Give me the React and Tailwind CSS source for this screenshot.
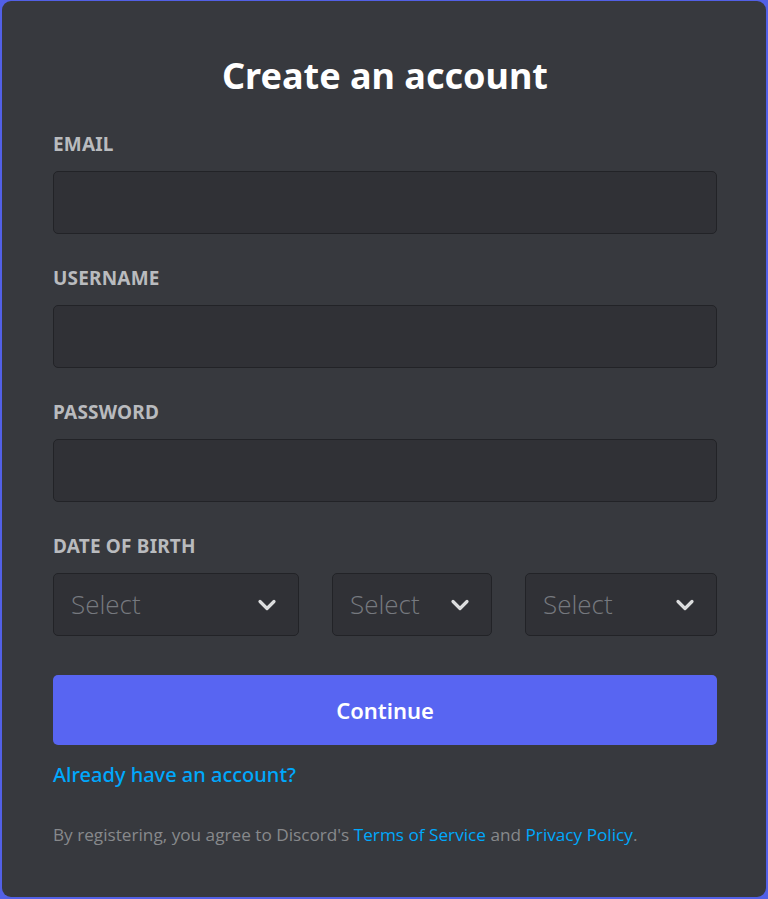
import React from 'react';

const Chevron = () => (
  <svg width="24" height="24" viewBox="0 0 24 24" className="text-[#dcddde]">
    <path d="M5 8.5l7 7 7-7" fill="none" stroke="currentColor" strokeWidth="3.2" strokeLinecap="round" strokeLinejoin="round" />
  </svg>
);

const Field = ({ label, className = '' }) => (
  <div className={className}>
    <label className="block text-[19px] leading-[20px] font-bold tracking-[0.01em] text-[#b9bbbe] mb-[17px]">{label}</label>
    <input className="block w-full h-[63px] rounded-[5px] bg-[#303136] border border-[#222327] outline-none px-4 text-[24px] text-[#dcddde]" />
  </div>
);

const Select = ({ width }) => (
  <div className={`${width} h-[63px] rounded-[5px] bg-[#303136] border border-[#222327] flex items-center justify-between pl-[17px] pr-[19px]`}>
    <span className="text-[26px] font-light text-[#76797f]" style={{ fontFamily: '"Open Sans", sans-serif' }}>Select</span>
    <Chevron />
  </div>
);

export default function App() {
  return (
    <div className="w-[768px] h-[899px] bg-[#5260e6] p-[2px] pt-[1px]" style={{ fontFamily: '"Noto Sans", "Open Sans", sans-serif' }}>
      <div className="h-full rounded-[9px] bg-[#37393e] pl-[51px] pr-[49px] pt-[52px]">
        <h1 className="text-center text-[36px] leading-[46px] font-bold text-white">Create an account</h1>

        <Field label="EMAIL" className="mt-[35px]" />
        <Field label="USERNAME" className="mt-[34px]" />
        <Field label="PASSWORD" className="mt-[34px]" />

        <div className="mt-[34px]">
          <label className="block text-[19px] leading-[20px] font-bold tracking-[0.01em] text-[#b9bbbe] mb-[17px]">DATE OF BIRTH</label>
          <div className="flex justify-between">
            <Select width="w-[246px]" />
            <Select width="w-[160px]" />
            <Select width="w-[192px]" />
          </div>
        </div>

        <button className="mt-[39px] w-full h-[70px] rounded-[5px] bg-[#5865f2] text-white text-[22px] font-semibold">Continue</button>

        <a className="block mt-[17px] text-[20px] leading-[26px] font-medium text-[#00a8fc]">Already have an account?</a>

        <p className="mt-[35px] text-[17.2px] leading-[24px] text-[#87898c]" style={{ fontFamily: '"Open Sans", sans-serif' }}>
          By registering, you agree to Discord's <a className="text-[#00a8fc]">Terms of Service</a> and <a className="text-[#00a8fc]">Privacy Policy</a>.
        </p>
      </div>
    </div>
  );
}
